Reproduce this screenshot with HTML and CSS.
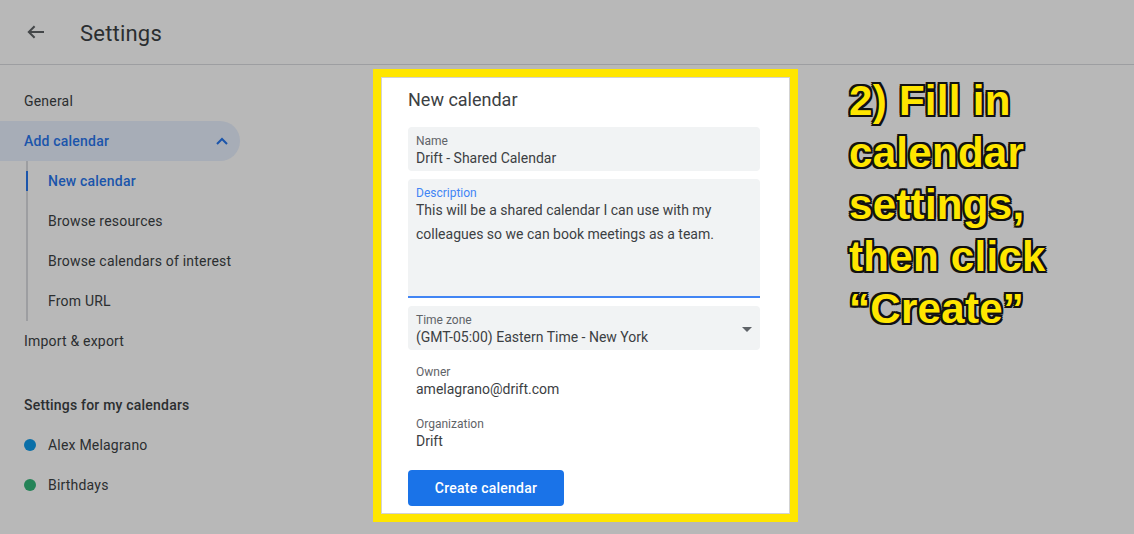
FILE: index.html
```html
<!DOCTYPE html>
<html>
	<head>
		<meta charset="UTF-8">
		<meta name="viewport" content="width=device-width, initial-scale=1.0" />
		<title>Settings</title>
		<link rel="stylesheet" href="styles.css">
	</head>
	<body>
		<header class="topbar">
			<span class="back">
				<svg width="24" height="24" viewBox="0 0 24 24"><path d="M20 12H4.8M10.6 6.2L4.8 12l5.8 5.8" fill="none" stroke="#444749" stroke-width="2"/></svg>
			</span>
			<h1 class="title">Settings</h1>
		</header>
		<div class="layout">
			<nav class="sidebar">
				<div class="nav-item">General</div>
				<div class="nav-item open">
					<span>Add calendar</span>
					<svg width="12" height="8" viewBox="0 0 12 8"><path d="M1 7l5-5 5 5" fill="none" stroke="#1b55ab" stroke-width="2"/></svg>
				</div>
				<div class="sub">
					<div class="sub-item active">New calendar</div>
					<div class="sub-item">Browse resources</div>
					<div class="sub-item">Browse calendars of interest</div>
					<div class="sub-item">From URL</div>
				</div>
				<div class="nav-item">Import &amp; export</div>
				<div class="nav-item heading">Settings for my calendars</div>
				<div class="nav-item"><span class="dot blue"></span>Alex Melagrano</div>
				<div class="nav-item"><span class="dot green"></span>Birthdays</div>
			</nav>
			<main class="content">
				<section class="card">
					<h2 class="card-title">New calendar</h2>
					<div class="field">
						<span class="field-label">Name</span>
						<span class="field-value">Drift - Shared Calendar</span>
					</div>
					<div class="field desc">
						<span class="field-label">Description</span>
						<span class="field-text">This will be a shared calendar I can use with my<br>colleagues so we can book meetings as a team.</span>
					</div>
					<div class="field select">
						<div class="select-inner">
							<span class="field-label">Time zone</span>
							<span class="field-value">(GMT-05:00) Eastern Time - New York</span>
						</div>
						<span class="caret"></span>
					</div>
					<div class="info owner">
						<span class="field-label">Owner</span>
						<span class="field-value">amelagrano@drift.com</span>
					</div>
					<div class="info org">
						<span class="field-label">Organization</span>
						<span class="field-value">Drift</span>
					</div>
					<button class="create">Create calendar</button>
				</section>
				<p class="note">2) Fill in<br>calendar<br>settings,<br>then click<br>“Create”</p>
			</main>
		</div>
	</body>
</html>
```

FILE: styles.css
```css
body{margin:0;padding:0;background:#b8b8b8;font-family:Roboto,"Liberation Sans",sans-serif;width:1134px;height:534px;overflow:hidden;}

.topbar{height:64px;border-bottom:1px solid #9d9ea1;display:flex;align-items:center;padding-left:24px;gap:32px;}
.back{width:24px;height:24px;display:flex;}
.title{margin:0;font-size:22px;font-weight:400;color:#2b2e30;line-height:28px;padding-top:3px;letter-spacing:.2px;}

.layout{display:flex;}
.sidebar{width:256px;padding-top:16px;flex-shrink:0;}
.nav-item{display:flex;align-items:center;height:40px;padding-left:24px;font-size:14px;letter-spacing:.2px;color:#2b2e30;box-sizing:border-box;}
.nav-item.open{width:240px;background:#a7adb7;color:#1b55ab;font-weight:500;border-radius:0 20px 20px 0;justify-content:space-between;padding-right:12px;}
.nav-item.heading{margin-top:24px;font-weight:500;}

.sub{margin:10px 0 10px 26px;border-left:2px solid #9d9ea1;}
.sub-item{height:40px;display:flex;align-items:center;padding-left:20px;font-size:14px;letter-spacing:.2px;color:#2b2e30;}
.sub-item:first-child{margin-top:-10px;}
.sub-item:last-child{margin-bottom:-10px;}
.sub-item.active{position:relative;color:#1b55ab;font-weight:500;}
.sub-item.active::before{content:"";position:absolute;left:-2px;top:10px;width:2px;height:20px;background:#1b55ab;}

.dot{width:12px;height:12px;border-radius:50%;margin-right:12px;}
.dot.blue{background:#0a6fa8;}
.dot.green{background:#248357;}

.content{display:flex;align-items:flex-start;}
.card{width:425px;height:453px;box-sizing:border-box;margin:4px 0 0 117px;border:8px solid #ffe600;background:#fff;box-shadow:inset 0 0 0 1px #d3d3d3;padding:11px 30px 0 27px;display:flex;flex-direction:column;}
.card-title{margin:0 0 15px;font-size:18px;line-height:24px;font-weight:400;color:#3c4043;}

.field{background:#f1f3f4;border-radius:4px;padding:6px 8px 4px;display:flex;flex-direction:column;}
.field-label{font-size:12px;line-height:16px;color:#5f6368;}
.field-value{font-size:14px;line-height:18px;color:#3c4043;}
.field.desc{margin-top:8px;height:119px;box-sizing:border-box;padding-top:7px;border-radius:4px 4px 0 0;border-bottom:2px solid #4285f4;}
.field.desc .field-label{color:#4285f4;line-height:14px;}
.field-text{font-size:14px;line-height:24px;margin-top:-2px;color:#3c4043;}
.field.select{margin-top:8px;flex-direction:row;justify-content:space-between;align-items:center;}
.select-inner{display:flex;flex-direction:column;}
.caret{width:0;height:0;border-left:5px solid transparent;border-right:5px solid transparent;border-top:5px solid #5f6368;}

.info{display:flex;flex-direction:column;padding-left:8px;}
.info.owner{margin-top:14px;}
.info.org{margin-top:18px;}

.create{align-self:flex-start;margin-top:20px;width:156px;height:36px;border:0;border-radius:4px;background:#1a73e8;color:#fff;font-family:Roboto,"Liberation Sans",sans-serif;font-size:14px;font-weight:500;letter-spacing:.25px;}

.note{margin:10px 0 0 51px;font-family:"Liberation Sans",Arial,sans-serif;font-weight:700;font-size:42px;letter-spacing:.3px;line-height:52px;color:#ffe600;
	text-shadow:-2px -2px 0 #111,2px -2px 0 #111,-2px 2px 0 #111,2px 2px 0 #111,0 2px 0 #111,0 -2px 0 #111,2px 0 0 #111,-2px 0 0 #111;}
```
